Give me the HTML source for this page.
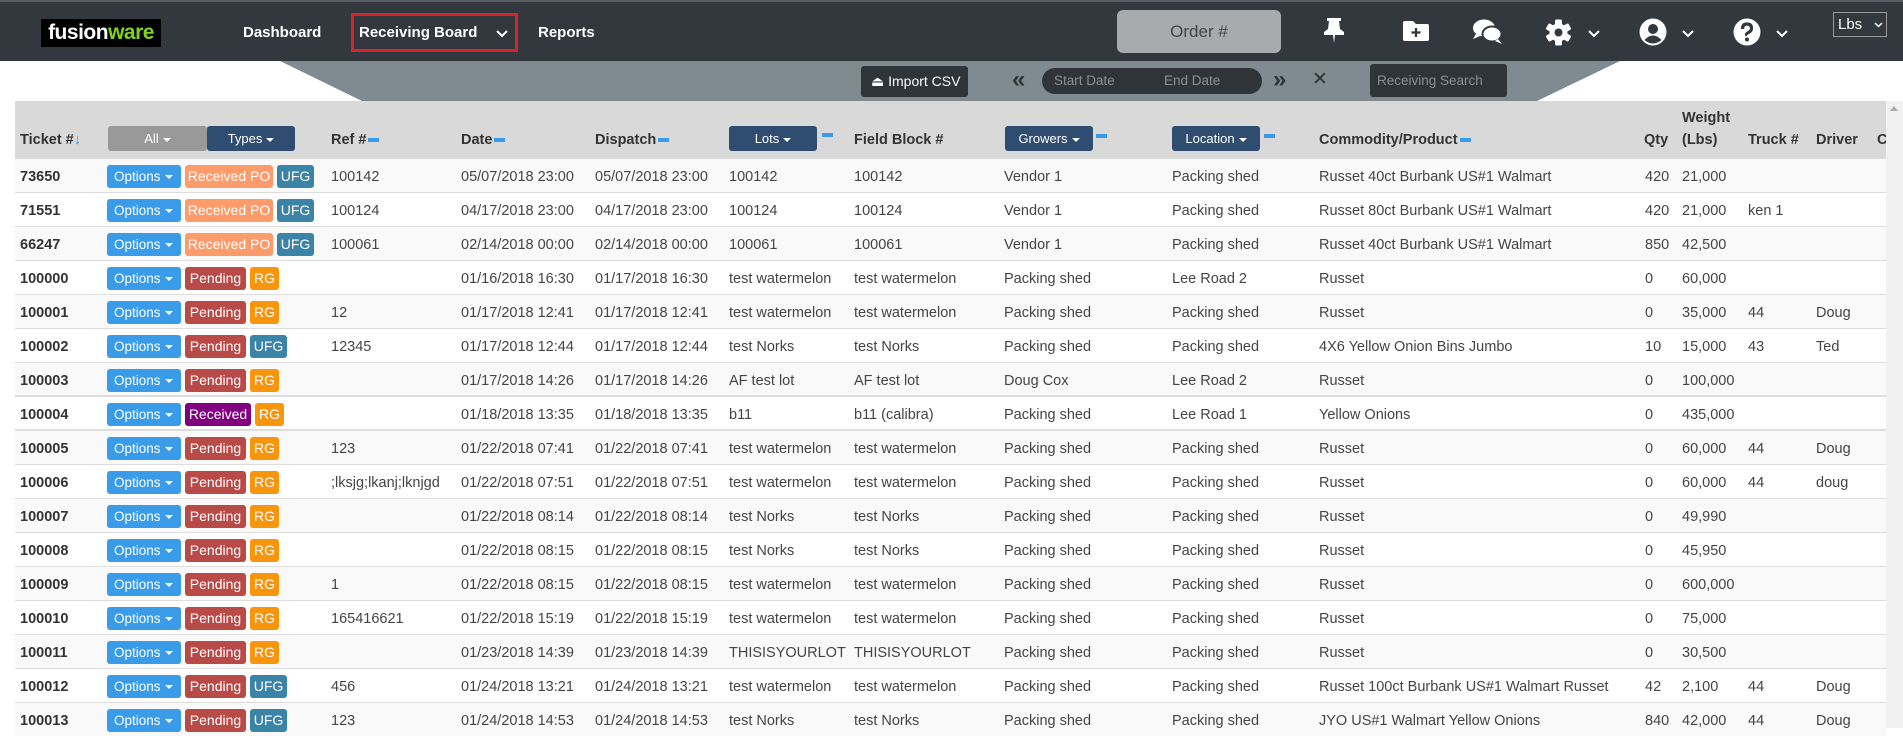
<!DOCTYPE html>
<html><head><meta charset="utf-8">
<style>
*{box-sizing:border-box;margin:0;padding:0}
body{width:1903px;height:728px;overflow:hidden;background:#fff;font-family:"Liberation Sans",sans-serif;color:#444;position:relative;font-size:14px}
.abs{position:absolute}
#top{left:0;top:0;width:1903px;height:61px;background:#33383e;border-top:2px solid #5b5f64}
.nav{color:#fff;font-weight:bold;font-size:15px;top:24px}
#band{left:0;top:61px;width:1903px;height:40px;background:#7f8b91;clip-path:polygon(280px 0,1620px 0,1537px 40px,362px 40px)}
#th{left:15px;top:101px;width:1871px;height:57px;background:#d9d9d9}
.hd{font-weight:bold;color:#333;top:132px;font-size:14.5px;white-space:nowrap}
.hb{top:126px;height:25px;border-radius:3px;color:#fff;font-size:13px;line-height:25px;text-align:center;white-space:nowrap}
.mn{width:11px;height:4px;background:#3a9be8;top:136px}
.im{display:inline-block;width:11px;height:4px;background:#3a9be8;vertical-align:middle;margin-left:2px}
.row{position:absolute;left:15px;width:1871px;height:34px;border-top:1px solid #ddd;font-size:14.5px;line-height:36px}
.row:nth-child(odd){background:#f9f9f9}
.row span{position:absolute;top:0;white-space:nowrap}
.t{left:5px;font-weight:bold;color:#333}
.op{left:92px;top:6px!important;width:74px;height:23px;line-height:23px;background:#3a9be8;color:#fff;border-radius:3px;font-size:13.5px;padding-left:7px}
.op .car{position:static!important}
.bg{top:6px!important;height:23px;line-height:23px;color:#fff;border-radius:3px;font-size:14px;text-align:center}
.rp{left:170px;width:88px;background:#fd9b6a}
.u1{left:262px;width:37px;background:#3a84a8}
.pe{left:170px;width:61px;background:#b84a48}
.rg{left:235px;width:29px;background:#f7950c}
.u2{left:235px;width:37px;background:#3a84a8}
.rc{left:170px;width:66px;background:#800080}
.rg2{left:240px;width:29px;background:#f7950c}
.c3{left:316px}.c4{left:446px}.c5{left:580px}.c6{left:714px}.c7{left:839px}.c8{left:989px}.c9{left:1157px}.c10{left:1304px}.c11{left:1630px}.c12{left:1667px}.c13{left:1733px}.c14{left:1801px}
.car{display:inline-block;width:0;height:0;border-left:4px solid transparent;border-right:4px solid transparent;border-top:4px solid #fff;vertical-align:middle;margin-left:4px}
.thick{box-shadow:0 -1px 0 #ddd}
</style></head><body>
<div id="top" class="abs"></div>
<div class="abs" style="left:41px;top:19px;width:120px;height:28px;background:#000;color:#fff;font-weight:bold;font-size:21px;line-height:28px;text-align:center;letter-spacing:-0.5px">fusion<span style="color:#7fd321">ware</span></div>
<div class="abs nav" style="left:243px">Dashboard</div>
<div class="abs" style="left:351px;top:13px;width:167px;height:39px;border:3px solid #d8232a"></div>
<div class="abs nav" style="left:359px">Receiving Board</div>
<svg class="abs" style="left:496px;top:30px" width="12" height="8"><path d="M1 1l5 5 5-5" stroke="#fff" stroke-width="2" fill="none"/></svg>
<div class="abs nav" style="left:538px">Reports</div>
<div class="abs" style="left:1117px;top:10px;width:164px;height:43px;background:#a8abad;border-radius:6px;color:#444;font-size:17px;line-height:43px;text-align:center">Order #</div>
<svg class="abs" style="left:1323px;top:17px" width="22" height="26" viewBox="0 0 22 26"><path d="M4 1h14v3h-2l1 8 4 3v3H1v-3l4-3 1-8H4z M10 18h2l-1 8z" fill="#fff"/></svg>
<svg class="abs" style="left:1402px;top:20px" width="28" height="22" viewBox="0 0 28 22"><path d="M1 3q0-2 2-2h8l3 3h11q2 0 2 2v13q0 2-2 2H3q-2 0-2-2z" fill="#fff"/><path d="M14 8v9M9.5 12.5h9" stroke="#33383e" stroke-width="2.2"/></svg>
<svg class="abs" style="left:1472px;top:18px" width="31" height="27" viewBox="0 0 31 27"><ellipse cx="12" cy="10" rx="11" ry="8.5" fill="#fff"/><path d="M4 16l-3 5 7-3z" fill="#fff"/><ellipse cx="20" cy="16" rx="9.5" ry="7.5" fill="#fff" stroke="#33383e" stroke-width="2"/><path d="M26 21l4 5-7-3z" fill="#fff"/></svg>
<svg class="abs" style="left:1545px;top:19px" width="27" height="27" viewBox="-13.5 -13.5 27 27"><g fill="#fff"><circle r="9"/><rect x="-3.5" y="-13" width="7" height="26" rx="1.5"/><rect x="-3.5" y="-13" width="7" height="26" rx="1.5" transform="rotate(60)"/><rect x="-3.5" y="-13" width="7" height="26" rx="1.5" transform="rotate(120)"/></g><circle r="4" fill="#33383e"/></svg>
<svg class="abs" style="left:1588px;top:30px" width="12" height="8"><path d="M1 1l5 5 5-5" stroke="#fff" stroke-width="2" fill="none"/></svg>
<svg class="abs" style="left:1639px;top:18px" width="28" height="28" viewBox="0 0 28 28"><circle cx="14" cy="14" r="13.5" fill="#fff"/><circle cx="14" cy="11" r="5" fill="#33383e"/><path d="M5.5 22q8.5-9 17 0q-8.5 7-17 0z" fill="#33383e"/></svg>
<svg class="abs" style="left:1682px;top:30px" width="12" height="8"><path d="M1 1l5 5 5-5" stroke="#fff" stroke-width="2" fill="none"/></svg>
<svg class="abs" style="left:1733px;top:18px" width="28" height="28" viewBox="0 0 28 28"><circle cx="14" cy="14" r="13.5" fill="#fff"/><path d="M9.5 11q0-5 4.5-5t4.5 4.5q0 2.5-3 4t-1.5 3" stroke="#33383e" stroke-width="3.2" fill="none"/><circle cx="14" cy="21.5" r="2" fill="#33383e"/></svg>
<svg class="abs" style="left:1776px;top:30px" width="12" height="8"><path d="M1 1l5 5 5-5" stroke="#fff" stroke-width="2" fill="none"/></svg>
<div class="abs" style="left:1833px;top:12px;width:54px;height:25px;border:1px solid #999;color:#fff;font-size:15px;line-height:23px;padding-left:4px">Lbs<svg style="position:absolute;left:40px;top:9px" width="9" height="6"><path d="M1 1l3.5 3.5 3.5-3.5" stroke="#fff" stroke-width="1.5" fill="none"/></svg></div>
<div id="band" class="abs"></div>
<div class="abs" style="left:861px;top:66px;width:107px;height:31px;background:#2f3438;border-radius:3px;color:#fff;font-size:14px;line-height:31px;padding-left:10px;white-space:nowrap">⏏ Import CSV</div>
<div class="abs" style="left:1012px;top:66px;color:#2f3438;font-size:24px;line-height:28px;font-weight:bold">«</div>
<div class="abs" style="left:1042px;top:68px;width:220px;height:26px;background:#2f3438;border-radius:13px;color:#8a8f93;font-size:13.5px;line-height:26px"><span style="position:absolute;left:12px">Start Date</span><span style="position:absolute;left:122px">End Date</span></div>
<div class="abs" style="left:1273px;top:66px;color:#2f3438;font-size:24px;line-height:28px;font-weight:bold">»</div>
<div class="abs" style="left:1312px;top:66px;color:#2f3438;font-size:19px;line-height:28px">✕</div>
<div class="abs" style="left:1370px;top:64px;width:137px;height:33px;background:#2f3438;border-radius:3px;color:#8a8f93;font-size:13.5px;line-height:33px;padding-left:7px">Receiving Search</div>
<div class="abs" style="left:1886px;top:101px;width:17px;height:627px;background:#f1f1f1"></div>
<div class="abs" style="left:1890px;top:106px;width:0;height:0;border-left:4px solid transparent;border-right:4px solid transparent;border-bottom:5px solid #aaa"></div>
<div id="th" class="abs"></div>
<div class="abs hd" style="left:20px">Ticket #<span style="color:#3a9be8">↓</span></div>
<div class="abs hb" style="left:108px;width:99px;background:#999">All<span class="car"></span></div>
<div class="abs hb" style="left:207px;width:88px;background:#2f4d70">Types<span class="car"></span></div>
<div class="abs hd" style="left:331px">Ref #<span class="im"></span></div>
<div class="abs hd" style="left:461px">Date<span class="im"></span></div>
<div class="abs hd" style="left:595px">Dispatch<span class="im"></span></div>
<div class="abs hb" style="left:729px;width:88px;background:#2f4d70">Lots<span class="car"></span></div><div class="abs mn" style="left:822px;top:133px"></div>
<div class="abs hd" style="left:854px">Field Block #</div>
<div class="abs hb" style="left:1005px;width:88px;background:#2f4d70">Growers<span class="car"></span></div><div class="abs mn" style="left:1096px;top:134px"></div>
<div class="abs hb" style="left:1172px;width:88px;background:#2f4d70">Location<span class="car"></span></div><div class="abs mn" style="left:1264px;top:134px"></div>
<div class="abs hd" style="left:1319px">Commodity/Product<span class="im"></span></div>
<div class="abs hd" style="left:1644px">Qty</div>
<div class="abs hd" style="left:1682px;top:110px">Weight</div>
<div class="abs hd" style="left:1682px">(Lbs)</div>
<div class="abs hd" style="left:1748px">Truck #</div>
<div class="abs hd" style="left:1816px">Driver</div>
<div class="abs hd" style="left:1877px;width:9px;overflow:hidden">C</div>
<div class="abs" style="left:0;top:158px;width:1903px">
<div class="row" style="top:0"><span class="t">73650</span><span class="op">Options<span class="car"></span></span><span class="bg rp">Received PO</span><span class="bg u1">UFG</span><span class="c3">100142</span><span class="c4">05/07/2018 23:00</span><span class="c5">05/07/2018 23:00</span><span class="c6">100142</span><span class="c7">100142</span><span class="c8">Vendor 1</span><span class="c9">Packing shed</span><span class="c10">Russet 40ct Burbank US#1 Walmart</span><span class="c11">420</span><span class="c12">21,000</span></div>
<div class="row" style="top:34px"><span class="t">71551</span><span class="op">Options<span class="car"></span></span><span class="bg rp">Received PO</span><span class="bg u1">UFG</span><span class="c3">100124</span><span class="c4">04/17/2018 23:00</span><span class="c5">04/17/2018 23:00</span><span class="c6">100124</span><span class="c7">100124</span><span class="c8">Vendor 1</span><span class="c9">Packing shed</span><span class="c10">Russet 80ct Burbank US#1 Walmart</span><span class="c11">420</span><span class="c12">21,000</span><span class="c13">ken 1</span></div>
<div class="row" style="top:68px"><span class="t">66247</span><span class="op">Options<span class="car"></span></span><span class="bg rp">Received PO</span><span class="bg u1">UFG</span><span class="c3">100061</span><span class="c4">02/14/2018 00:00</span><span class="c5">02/14/2018 00:00</span><span class="c6">100061</span><span class="c7">100061</span><span class="c8">Vendor 1</span><span class="c9">Packing shed</span><span class="c10">Russet 40ct Burbank US#1 Walmart</span><span class="c11">850</span><span class="c12">42,500</span></div>
<div class="row" style="top:102px"><span class="t">100000</span><span class="op">Options<span class="car"></span></span><span class="bg pe">Pending</span><span class="bg rg">RG</span><span class="c4">01/16/2018 16:30</span><span class="c5">01/17/2018 16:30</span><span class="c6">test watermelon</span><span class="c7">test watermelon</span><span class="c8">Packing shed</span><span class="c9">Lee Road 2</span><span class="c10">Russet</span><span class="c11">0</span><span class="c12">60,000</span></div>
<div class="row" style="top:136px"><span class="t">100001</span><span class="op">Options<span class="car"></span></span><span class="bg pe">Pending</span><span class="bg rg">RG</span><span class="c3">12</span><span class="c4">01/17/2018 12:41</span><span class="c5">01/17/2018 12:41</span><span class="c6">test watermelon</span><span class="c7">test watermelon</span><span class="c8">Packing shed</span><span class="c9">Packing shed</span><span class="c10">Russet</span><span class="c11">0</span><span class="c12">35,000</span><span class="c13">44</span><span class="c14">Doug</span></div>
<div class="row" style="top:170px"><span class="t">100002</span><span class="op">Options<span class="car"></span></span><span class="bg pe">Pending</span><span class="bg u2">UFG</span><span class="c3">12345</span><span class="c4">01/17/2018 12:44</span><span class="c5">01/17/2018 12:44</span><span class="c6">test Norks</span><span class="c7">test Norks</span><span class="c8">Packing shed</span><span class="c9">Packing shed</span><span class="c10">4X6 Yellow Onion Bins Jumbo</span><span class="c11">10</span><span class="c12">15,000</span><span class="c13">43</span><span class="c14">Ted</span></div>
<div class="row" style="top:204px"><span class="t">100003</span><span class="op">Options<span class="car"></span></span><span class="bg pe">Pending</span><span class="bg rg">RG</span><span class="c4">01/17/2018 14:26</span><span class="c5">01/17/2018 14:26</span><span class="c6">AF test lot</span><span class="c7">AF test lot</span><span class="c8">Doug Cox</span><span class="c9">Lee Road 2</span><span class="c10">Russet</span><span class="c11">0</span><span class="c12">100,000</span></div>
<div class="row thick" style="top:238px"><span class="t">100004</span><span class="op">Options<span class="car"></span></span><span class="bg rc">Received</span><span class="bg rg2">RG</span><span class="c4">01/18/2018 13:35</span><span class="c5">01/18/2018 13:35</span><span class="c6">b11</span><span class="c7">b11 (calibra)</span><span class="c8">Packing shed</span><span class="c9">Lee Road 1</span><span class="c10">Yellow Onions</span><span class="c11">0</span><span class="c12">435,000</span></div>
<div class="row thick" style="top:272px"><span class="t">100005</span><span class="op">Options<span class="car"></span></span><span class="bg pe">Pending</span><span class="bg rg">RG</span><span class="c3">123</span><span class="c4">01/22/2018 07:41</span><span class="c5">01/22/2018 07:41</span><span class="c6">test watermelon</span><span class="c7">test watermelon</span><span class="c8">Packing shed</span><span class="c9">Packing shed</span><span class="c10">Russet</span><span class="c11">0</span><span class="c12">60,000</span><span class="c13">44</span><span class="c14">Doug</span></div>
<div class="row" style="top:306px"><span class="t">100006</span><span class="op">Options<span class="car"></span></span><span class="bg pe">Pending</span><span class="bg rg">RG</span><span class="c3">;lksjg;lkanj;lknjgd</span><span class="c4">01/22/2018 07:51</span><span class="c5">01/22/2018 07:51</span><span class="c6">test watermelon</span><span class="c7">test watermelon</span><span class="c8">Packing shed</span><span class="c9">Packing shed</span><span class="c10">Russet</span><span class="c11">0</span><span class="c12">60,000</span><span class="c13">44</span><span class="c14">doug</span></div>
<div class="row" style="top:340px"><span class="t">100007</span><span class="op">Options<span class="car"></span></span><span class="bg pe">Pending</span><span class="bg rg">RG</span><span class="c4">01/22/2018 08:14</span><span class="c5">01/22/2018 08:14</span><span class="c6">test Norks</span><span class="c7">test Norks</span><span class="c8">Packing shed</span><span class="c9">Packing shed</span><span class="c10">Russet</span><span class="c11">0</span><span class="c12">49,990</span></div>
<div class="row" style="top:374px"><span class="t">100008</span><span class="op">Options<span class="car"></span></span><span class="bg pe">Pending</span><span class="bg rg">RG</span><span class="c4">01/22/2018 08:15</span><span class="c5">01/22/2018 08:15</span><span class="c6">test Norks</span><span class="c7">test Norks</span><span class="c8">Packing shed</span><span class="c9">Packing shed</span><span class="c10">Russet</span><span class="c11">0</span><span class="c12">45,950</span></div>
<div class="row" style="top:408px"><span class="t">100009</span><span class="op">Options<span class="car"></span></span><span class="bg pe">Pending</span><span class="bg rg">RG</span><span class="c3">1</span><span class="c4">01/22/2018 08:15</span><span class="c5">01/22/2018 08:15</span><span class="c6">test watermelon</span><span class="c7">test watermelon</span><span class="c8">Packing shed</span><span class="c9">Packing shed</span><span class="c10">Russet</span><span class="c11">0</span><span class="c12">600,000</span></div>
<div class="row" style="top:442px"><span class="t">100010</span><span class="op">Options<span class="car"></span></span><span class="bg pe">Pending</span><span class="bg rg">RG</span><span class="c3">165416621</span><span class="c4">01/22/2018 15:19</span><span class="c5">01/22/2018 15:19</span><span class="c6">test watermelon</span><span class="c7">test watermelon</span><span class="c8">Packing shed</span><span class="c9">Packing shed</span><span class="c10">Russet</span><span class="c11">0</span><span class="c12">75,000</span></div>
<div class="row" style="top:476px"><span class="t">100011</span><span class="op">Options<span class="car"></span></span><span class="bg pe">Pending</span><span class="bg rg">RG</span><span class="c4">01/23/2018 14:39</span><span class="c5">01/23/2018 14:39</span><span class="c6">THISISYOURLOT</span><span class="c7">THISISYOURLOT</span><span class="c8">Packing shed</span><span class="c9">Packing shed</span><span class="c10">Russet</span><span class="c11">0</span><span class="c12">30,500</span></div>
<div class="row" style="top:510px"><span class="t">100012</span><span class="op">Options<span class="car"></span></span><span class="bg pe">Pending</span><span class="bg u2">UFG</span><span class="c3">456</span><span class="c4">01/24/2018 13:21</span><span class="c5">01/24/2018 13:21</span><span class="c6">test watermelon</span><span class="c7">test watermelon</span><span class="c8">Packing shed</span><span class="c9">Packing shed</span><span class="c10">Russet 100ct Burbank US#1 Walmart Russet</span><span class="c11">42</span><span class="c12">2,100</span><span class="c13">44</span><span class="c14">Doug</span></div>
<div class="row" style="top:544px"><span class="t">100013</span><span class="op">Options<span class="car"></span></span><span class="bg pe">Pending</span><span class="bg u2">UFG</span><span class="c3">123</span><span class="c4">01/24/2018 14:53</span><span class="c5">01/24/2018 14:53</span><span class="c6">test Norks</span><span class="c7">test Norks</span><span class="c8">Packing shed</span><span class="c9">Packing shed</span><span class="c10">JYO US#1 Walmart Yellow Onions</span><span class="c11">840</span><span class="c12">42,000</span><span class="c13">44</span><span class="c14">Doug</span></div>
</div>
</body></html>
